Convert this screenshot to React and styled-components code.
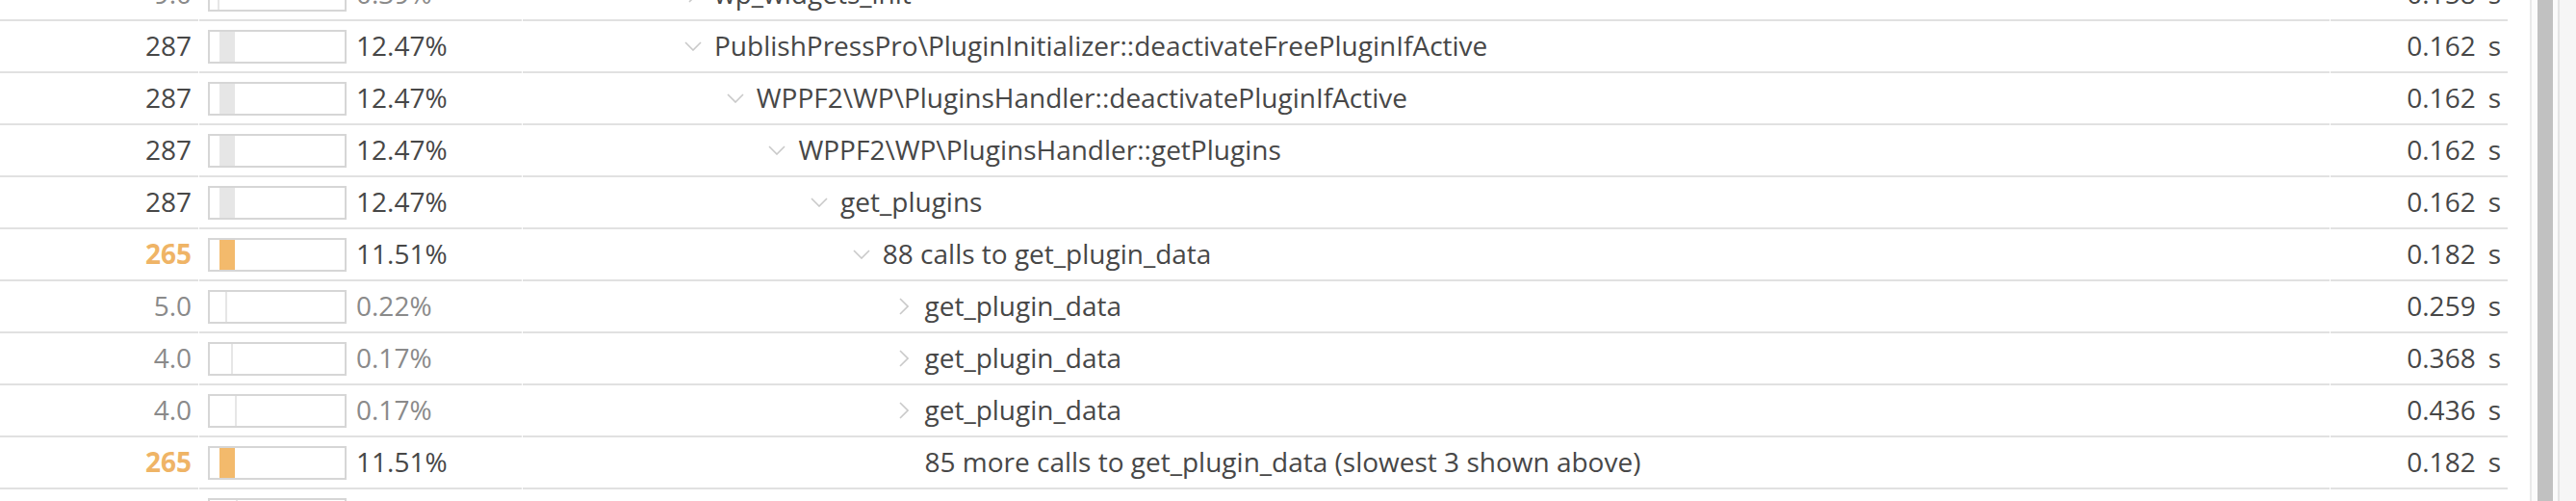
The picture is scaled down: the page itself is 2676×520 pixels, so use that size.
import React from "react";
import styled, { createGlobalStyle } from "styled-components";

const GlobalStyle = createGlobalStyle`
  html, body {
    margin: 0;
    padding: 0;
    background: #ffffff;
    overflow: hidden;
  }
  body {
    font-family: "Open Sans", "DejaVu Sans", sans-serif;
  }
`;

const Page = styled.div`
  display: flex;
  height: 520px;
  overflow: hidden;
  background: #ffffff;
`;

const Table = styled.div`
  flex: none;
  width: 2605px;
  margin-top: -32px;
  display: flex;
  flex-direction: column;
`;

const Spacer = styled.div`
  flex: none;
  width: 23px;
`;

const ScrollTrack = styled.div`
  flex: none;
  box-sizing: border-box;
  width: 31px;
  height: 100%;
  border-left: 2px solid #e9e9e9;
  border-right: 2px solid #e4e4e4;
  background: #fbfbfb;
  padding: 0 5px 0 6px;
`;

const ScrollThumb = styled.div`
  width: 16px;
  height: 100%;
  background: #c1c1c1;
`;

const Outside = styled.div`
  flex: 1;
  background: #f6f6f6;
`;

const Row = styled.div`
  display: grid;
  grid-template-columns: 206px 335px 1877px 184px;
  column-gap: 1px;
  height: 54px;
  font-size: 28px;
  color: #474747;
`;

const Cell = styled.div`
  box-sizing: border-box;
  height: 54px;
  border-bottom: 2px solid #e1e1e1;
  display: flex;
  align-items: center;
  white-space: nowrap;
  padding-bottom: 2px;
`;

const CountCell = styled(Cell)`
  justify-content: flex-end;
  padding-right: 7px;
  color: ${(p) => (p.$tone === "hot" ? "#efb466" : p.$tone === "dim" ? "#8a8a8a" : "#474747")};
  font-weight: ${(p) => (p.$tone === "hot" ? 700 : 400)};
`;

const BarCell = styled(Cell)`
  padding-left: 9px;
  gap: 10px;
`;

const Track = styled.div`
  box-sizing: border-box;
  flex: none;
  width: 144px;
  height: 35px;
  border: 2px solid #d6d6d6;
  display: flex;
  margin-top: 2px;
  background: #ffffff;
`;

const Fill = styled.div`
  flex: none;
  height: 100%;
  background: ${(p) => (p.$hot ? "#f3ba6c" : "#e6e6e6")};
`;

const Percent = styled.span`
  color: ${(p) => (p.$dim ? "#8a8a8a" : "#474747")};
`;

const TreeCell = styled(Cell)`
  padding-left: ${(p) => 168 + p.$depth * 43.7}px;
`;

const Toggle = styled.span`
  flex: none;
  width: 18px;
  height: 18px;
  margin-right: 13px;
  display: flex;
  align-items: center;
  justify-content: center;
  margin-top: 2px;
`;

const Name = styled.span`
  color: #474747;
`;

const TimeCell = styled(Cell)`
  justify-content: flex-end;
  padding-right: 7px;
`;

const Unit = styled.span`
  margin-left: 13px;
`;

const ChevronDown = () => (
  <svg width="18" height="10" viewBox="0 0 18 10" fill="none">
    <polyline points="1,1 9,9 17,1" stroke="#c9c9c9" strokeWidth="1.6" strokeLinejoin="miter" />
  </svg>
);

const ChevronRight = () => (
  <svg width="10" height="18" viewBox="0 0 10 18" fill="none">
    <polyline points="1,1 9,9 1,17" stroke="#c9c9c9" strokeWidth="1.6" strokeLinejoin="miter" />
  </svg>
);

const rows = [
  { count: "9.0", tone: "dim", pct: "0.39%", dimPct: true, bar: [8, 2], name: "wp_widgets_init", depth: 0, toggle: "closed", time: "0.158" },
  { count: "287", tone: "", pct: "12.47%", bar: [10, 16], name: "PublishPressPro\\PluginInitializer::deactivateFreePluginIfActive", depth: 0, toggle: "open", time: "0.162" },
  { count: "287", tone: "", pct: "12.47%", bar: [10, 16], name: "WPPF2\\WP\\PluginsHandler::deactivatePluginIfActive", depth: 1, toggle: "open", time: "0.162" },
  { count: "287", tone: "", pct: "12.47%", bar: [10, 16], name: "WPPF2\\WP\\PluginsHandler::getPlugins", depth: 2, toggle: "open", time: "0.162" },
  { count: "287", tone: "", pct: "12.47%", bar: [10, 16], name: "get_plugins", depth: 3, toggle: "open", time: "0.162" },
  { count: "265", tone: "hot", pct: "11.51%", bar: [10, 16], hot: true, name: "88 calls to get_plugin_data", depth: 4, toggle: "open", time: "0.182" },
  { count: "5.0", tone: "dim", pct: "0.22%", dimPct: true, bar: [16, 2], name: "get_plugin_data", depth: 5, toggle: "closed", time: "0.259" },
  { count: "4.0", tone: "dim", pct: "0.17%", dimPct: true, bar: [22, 2], name: "get_plugin_data", depth: 5, toggle: "closed", time: "0.368" },
  { count: "4.0", tone: "dim", pct: "0.17%", dimPct: true, bar: [26, 2], name: "get_plugin_data", depth: 5, toggle: "closed", time: "0.436" },
  { count: "265", tone: "hot", pct: "11.51%", bar: [10, 16], hot: true, name: "85 more calls to get_plugin_data (slowest 3 shown above)", depth: 5, toggle: "none", time: "0.182" },
  { count: "3.0", tone: "dim", pct: "0.13%", dimPct: true, bar: [27, 2], name: "wp_get_active_and_valid_plugins", depth: 4, toggle: "closed", time: "0.101" },
];

function TableRow({ r }) {
  return (
    <Row>
      <CountCell $tone={r.tone}>{r.count}</CountCell>
      <BarCell>
        <Track>
          <Fill $hot={r.hot} style={{ marginLeft: r.bar[0], width: r.bar[1] }} />
        </Track>
        <Percent $dim={r.dimPct}>{r.pct}</Percent>
      </BarCell>
      <TreeCell $depth={r.depth}>
        <Toggle>
          {r.toggle === "open" && <ChevronDown />}
          {r.toggle === "closed" && <ChevronRight />}
        </Toggle>
        <Name>{r.name}</Name>
      </TreeCell>
      <TimeCell>
        <span>{r.time}</span>
        <Unit>s</Unit>
      </TimeCell>
    </Row>
  );
}

export default function App() {
  return (
    <>
      <GlobalStyle />
      <Page>
        <Table>
          {rows.map((r, i) => (
            <TableRow key={i} r={r} />
          ))}
        </Table>
        <Spacer />
        <ScrollTrack>
          <ScrollThumb />
        </ScrollTrack>
        <Outside />
      </Page>
    </>
  );
}
